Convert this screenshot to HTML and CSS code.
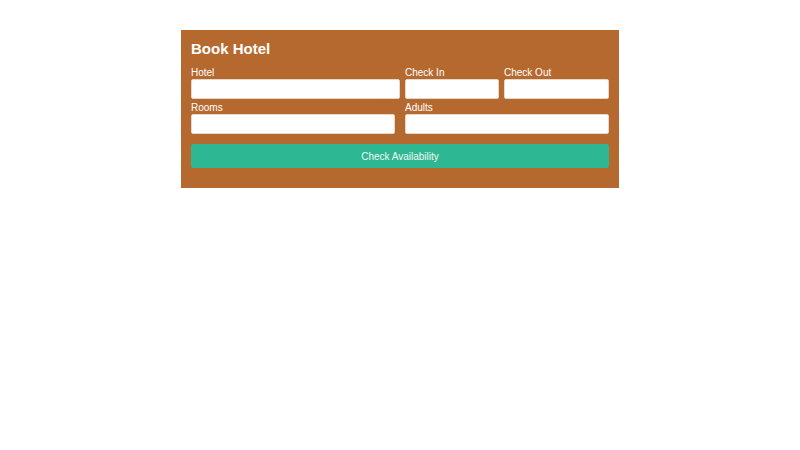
FILE: index.html
```html
<!DOCTYPE html>
<html>
<head>
<meta charset="utf-8">
<link rel="stylesheet" href="styles.css">
</head>
<body>
<div class="card">
  <h1 class="title">Book Hotel</h1>
  <div class="row row-top">
    <label class="field f-hotel"><span class="lbl">Hotel</span><input class="inp" type="text"></label>
    <label class="field f-in"><span class="lbl">Check In</span><input class="inp" type="text"></label>
    <label class="field f-out"><span class="lbl">Check Out</span><input class="inp" type="text"></label>
  </div>
  <div class="row row-bottom">
    <label class="field f-half"><span class="lbl">Rooms</span><input class="inp" type="text"></label>
    <label class="field f-half"><span class="lbl">Adults</span><input class="inp" type="text"></label>
  </div>
  <button class="btn" type="button">Check Availability</button>
</div>
</body>
</html>
```
FILE: styles.css
```css
html, body {
  margin: 0;
  padding: 0;
  background: #ffffff;
  font-family: "Liberation Sans", Arial, sans-serif;
}
.card {
  width: 418px;
  margin: 30px auto 0;
  padding: 10px 10px 20px;
  background: #b5692f;
  color: #ffffff;
}
.title {
  margin: 0 0 9px;
  font-size: 15px;
  line-height: 18px;
  font-weight: bold;
}
.row {
  display: flex;
}
.row-top { gap: 5px; }
.row-bottom { gap: 10px; margin-top: 3px; }
.field {
  display: flex;
  flex-direction: column;
}
.f-hotel { width: 209px; }
.f-in { width: 94px; }
.f-out { width: 105px; }
.f-half { width: 204px; }
.lbl {
  font-size: 10px;
  line-height: 12px;
}
.inp {
  box-sizing: border-box;
  width: 100%;
  height: 20px;
  margin: 0;
  padding: 0 4px;
  border: 1px solid #e6d7cb;
  border-radius: 2px;
  background: #ffffff;
  font: 10px "Liberation Sans", Arial, sans-serif;
}
.btn {
  display: block;
  width: 100%;
  height: 24px;
  margin-top: 10px;
  padding: 0;
  border: none;
  border-radius: 2px;
  background: #2eb793;
  color: #f2f7f0;
  font: 10px "Liberation Sans", Arial, sans-serif;
}
```
